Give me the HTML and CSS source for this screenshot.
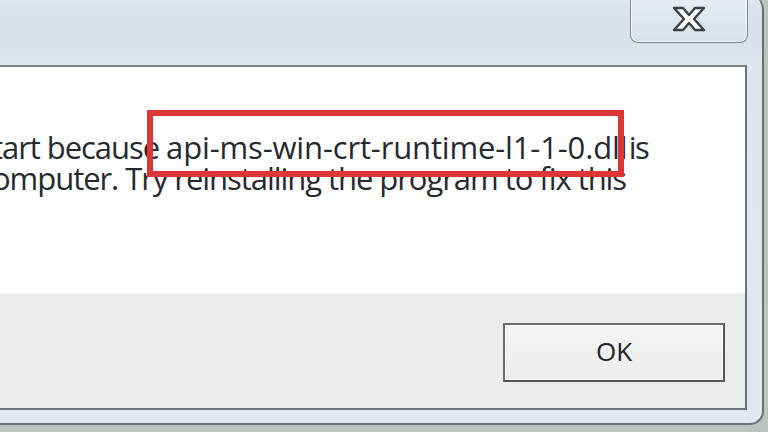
FILE: index.html
```html
<!DOCTYPE html>
<html lang="en">
<head>
<meta charset="utf-8">
<title>Error</title>
<link rel="stylesheet" href="styles.css">
</head>
<body>
<div class="window">
  <div class="titlebar">
    <div class="close-btn">
      <svg class="close-x" width="34" height="26" viewBox="0 0 34 26">
        <polygon points="2,2 11,2 17,9 23,2 32,2 22,13 32,24 23,24 17,17 11,24 2,24 12,13" fill="#ffffff" stroke="#3c3f44" stroke-width="2.4" stroke-linejoin="round"/>
      </svg>
    </div>
  </div>
  <div class="client">
    <div class="message">
      <div class="line line-1"><span class="lead">tart because </span><span class="dll">api-ms-win-crt-runtime-l1-1-0.dll</span><span class="tail"> is</span></div>
      <div class="line line-2">omputer. Try reinstalling the program to fix this</div>
      <div class="highlight"></div>
    </div>
    <div class="actions">
      <button class="ok-btn">OK</button>
    </div>
  </div>
</div>
</body>
</html>
```
FILE: styles.css
```css
html, body {
  margin: 0;
  padding: 0;
  width: 768px;
  height: 432px;
  overflow: hidden;
  background: #bcc2bd;
}

.window {
  width: 747px;
  height: 416px;
  margin-top: -6px;
  padding-right: 15px;
  padding-bottom: 13px;
  background: linear-gradient(180deg, #eef1f5 0px, #dde3ec 10px, #d9e0ea 40px, #e0e5ee 71px, #e3e7f0 100%);
  border-right: 2px solid #6b6f75;
  border-bottom: 2px solid #6b6f75;
  border-top-right-radius: 16px;
  border-bottom-right-radius: 14px;
  display: flex;
  flex-direction: column;
}

.titlebar {
  height: 71px;
  display: flex;
  justify-content: flex-end;
  align-items: flex-start;
}

.close-btn {
  width: 118px;
  height: 49px;
  margin-right: -1px;
  border: 1px solid #7d8187;
  border-top: none;
  border-bottom-left-radius: 8px;
  border-bottom-right-radius: 8px;
  background: linear-gradient(180deg, #e9edf3 0%, #dfe5ee 60%, #d8dfe9 100%);
  box-shadow: inset 0 0 0 1px rgba(255, 255, 255, 0.75);
  display: flex;
  justify-content: center;
  align-items: flex-end;
  padding-bottom: 10px;
  box-sizing: border-box;
}

.close-x {
  display: block;
}

.client {
  flex: 1;
  display: flex;
  flex-direction: column;
  border-top: 2px solid #7c8087;
  border-right: 2px solid #6e7277;
  border-bottom: 2px solid #6e7277;
  overflow: hidden;
}

.message {
  position: relative;
  height: 226px;
  box-sizing: border-box;
  background: #ffffff;
  padding-top: 65px;
  font-family: "Open Sans", "Noto Sans", sans-serif;
  font-size: 31px;
  line-height: 31px;
  color: #262a30;
  white-space: nowrap;
}

.line {
  margin-left: -8px;
}

.lead {
  letter-spacing: -1.05px;
}

.dll {
  letter-spacing: -0.15px;
}

.tail {
  letter-spacing: -1.6px;
  word-spacing: -5px;
}

.line-2 {
  letter-spacing: -1.05px;
}

.highlight {
  position: absolute;
  left: 147px;
  top: 43px;
  width: 477px;
  height: 67px;
  box-sizing: border-box;
  border: 6px solid #dc3636;
}

.actions {
  flex: 1;
  background: #ececec;
  border-top: 1px solid #f2f2f2;
  display: flex;
  justify-content: flex-end;
  align-items: flex-start;
  padding-top: 29px;
  padding-right: 20px;
}

.ok-btn {
  width: 222px;
  height: 59px;
  box-sizing: border-box;
  border: 2px solid #6a6a6a;
  border-right-color: #555555;
  border-bottom-color: #555555;
  background: linear-gradient(180deg, #f4f4f4 0%, #ececec 100%);
  box-shadow: inset 0 0 0 1px #fbfbfb;
  font-family: "Open Sans", "Noto Sans", sans-serif;
  font-size: 26px;
  color: #222428;
  padding: 0;
  padding-bottom: 4px;
}
```
